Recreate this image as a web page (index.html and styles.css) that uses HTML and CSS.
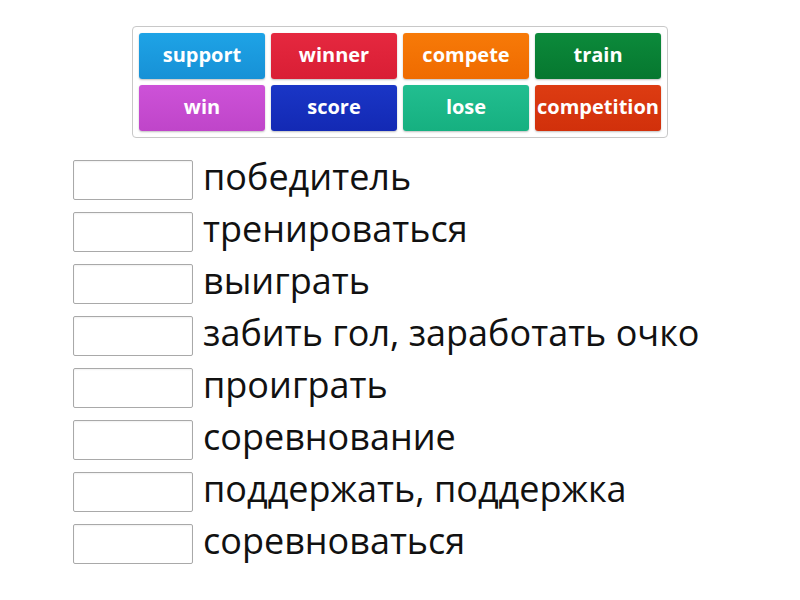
FILE: index.html
```html
<!DOCTYPE html>
<html>
<head>
<meta charset="utf-8">
<link rel="stylesheet" href="styles.css">
</head>
<body>
<div class="page">
  <div class="bank">
    <div class="tile c-blue">support</div>
    <div class="tile c-red">winner</div>
    <div class="tile c-orange">compete</div>
    <div class="tile c-green">train</div>
    <div class="tile c-purple">win</div>
    <div class="tile c-navy">score</div>
    <div class="tile c-teal">lose</div>
    <div class="tile c-rust">competition</div>
  </div>
  <div class="rows">
    <div class="row"><div class="slot"></div><span class="label">победитель</span></div>
    <div class="row"><div class="slot"></div><span class="label">тренироваться</span></div>
    <div class="row"><div class="slot"></div><span class="label">выиграть</span></div>
    <div class="row"><div class="slot"></div><span class="label">забить гол, заработать очко</span></div>
    <div class="row"><div class="slot"></div><span class="label">проиграть</span></div>
    <div class="row"><div class="slot"></div><span class="label">соревнование</span></div>
    <div class="row"><div class="slot"></div><span class="label">поддержать, поддержка</span></div>
    <div class="row"><div class="slot"></div><span class="label">соревноваться</span></div>
  </div>
</div>
</body>
</html>
```
FILE: styles.css
```css
html, body {
  margin: 0;
  padding: 0;
  background: #ffffff;
  font-family: "Open Sans", "Noto Sans", sans-serif;
}
.page {
  width: 800px;
  height: 600px;
  display: flex;
  flex-direction: column;
  align-items: center;
  padding-top: 26px;
  box-sizing: border-box;
}
.bank {
  display: grid;
  grid-template-columns: repeat(4, 126px);
  grid-auto-rows: 46px;
  gap: 6px;
  padding: 6px;
  border: 1px solid #c8c8c8;
  border-radius: 4px;
}
.tile {
  display: flex;
  align-items: center;
  justify-content: center;
  padding-bottom: 4px;
  box-sizing: border-box;
  color: #ffffff;
  font-weight: 700;
  font-size: 20px;
  border-radius: 3px;
  box-shadow: 0 1px 2px rgba(0,0,0,0.25);
  white-space: nowrap;
}
.c-blue { background: linear-gradient(#1ea3e6, #1791d6); }
.c-red { background: linear-gradient(#e5283f, #d91e35); }
.c-orange { background: linear-gradient(#f77a08, #ef6b00); }
.c-green { background: linear-gradient(#0c8a3b, #06772f); }
.c-purple { background: linear-gradient(#cd52d8, #bf45c9); }
.c-navy { background: linear-gradient(#1a36c6, #1329b4); }
.c-teal { background: linear-gradient(#22be90, #16b080); }
.c-rust { background: linear-gradient(#dd3c12, #d1300b); }
.rows {
  align-self: flex-start;
  margin-left: 73px;
  margin-top: 22px;
  display: flex;
  flex-direction: column;
  gap: 12px;
}
.row {
  display: flex;
  align-items: flex-start;
  height: 40px;
}
.slot {
  width: 118px;
  height: 38px;
  border: 1px solid #a9a9a9;
  border-radius: 2px;
  background: #ffffff;
  box-shadow: inset 0 1px 2px rgba(0,0,0,0.06);
}
.label {
  margin-left: 10px;
  font-size: 36px;
  color: #111111;
  line-height: 34px;
  white-space: nowrap;
}
```
